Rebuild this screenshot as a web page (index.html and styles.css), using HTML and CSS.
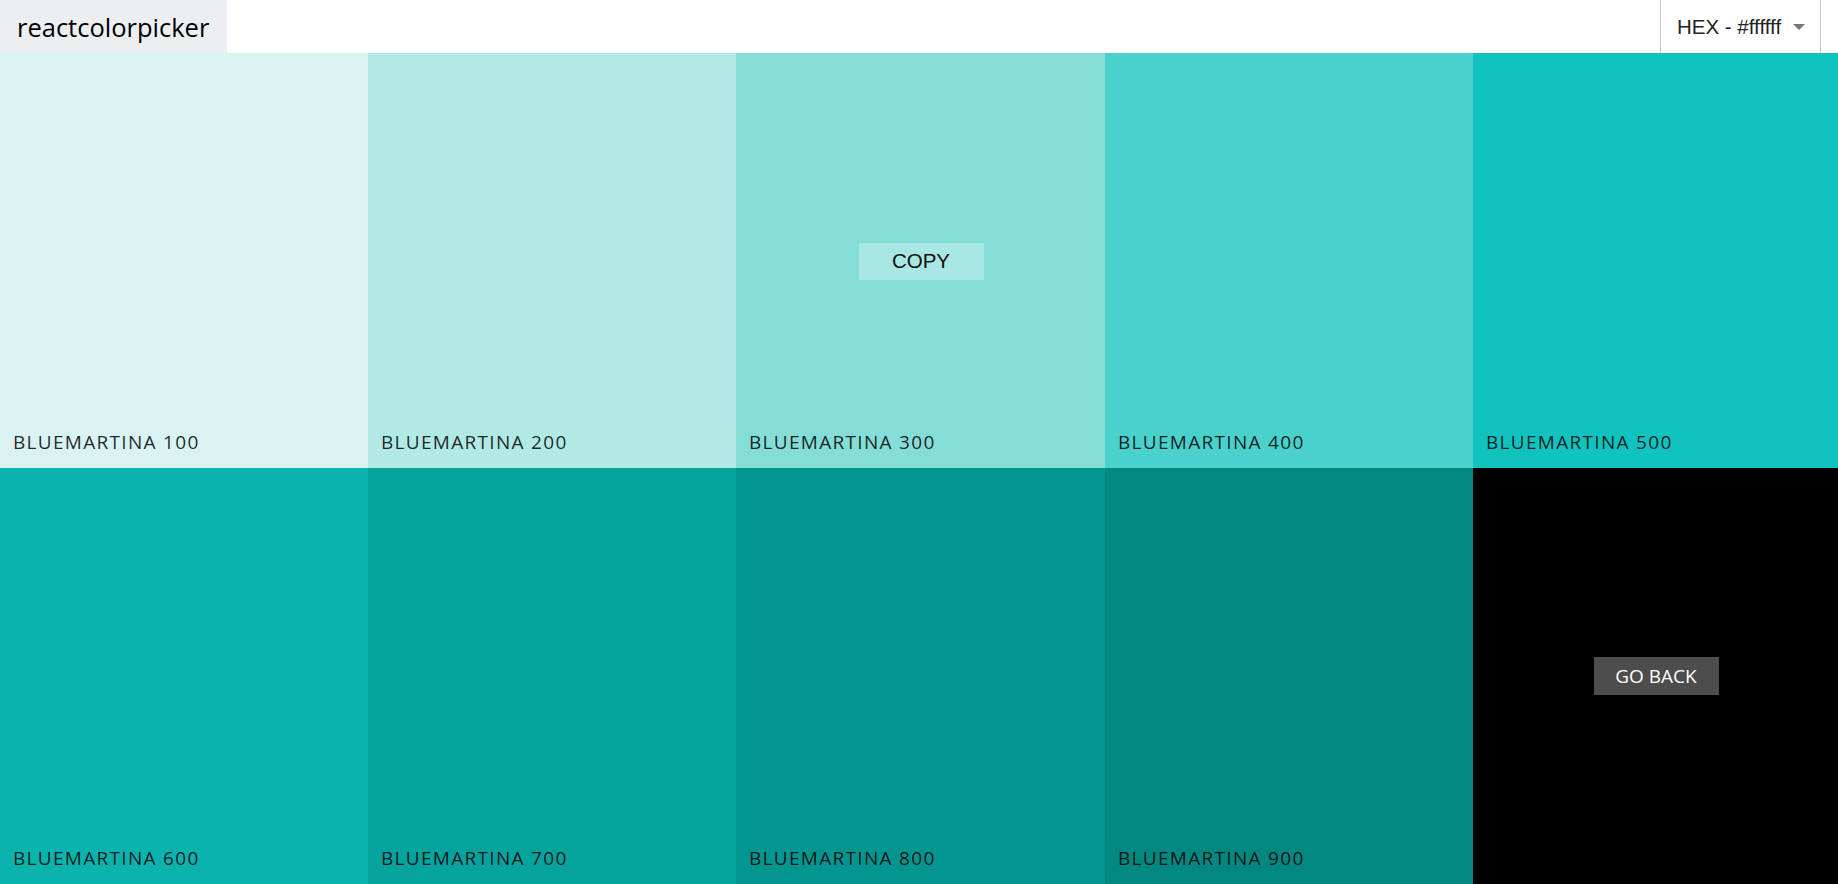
FILE: index.html
```html
<!DOCTYPE html>
<html lang="en">
<head>
<meta charset="utf-8">
<title>reactcolorpicker</title>
<link rel="stylesheet" href="styles.css">
</head>
<body>
<div class="page">
  <nav class="navbar">
    <div class="logo">reactcolorpicker</div>
    <div class="select">
      <span class="select-text">HEX - #ffffff</span>
      <span class="select-arrow"></span>
    </div>
  </nav>
  <main class="palette">
    <div class="box c100"><span class="label">BLUEMARTINA 100</span></div>
    <div class="box c200"><span class="label">BLUEMARTINA 200</span></div>
    <div class="box c300"><button class="copy">COPY</button><span class="label">BLUEMARTINA 300</span></div>
    <div class="box c400"><span class="label">BLUEMARTINA 400</span></div>
    <div class="box c500"><span class="label">BLUEMARTINA 500</span></div>
    <div class="box c600"><span class="label">BLUEMARTINA 600</span></div>
    <div class="box c700"><span class="label">BLUEMARTINA 700</span></div>
    <div class="box c800"><span class="label">BLUEMARTINA 800</span></div>
    <div class="box c900"><span class="label">BLUEMARTINA 900</span></div>
    <div class="box back"><button class="back-button">GO BACK</button></div>
  </main>
</div>
</body>
</html>
```
FILE: styles.css
```css
* { box-sizing: border-box; }
html, body { margin: 0; padding: 0; height: 100%; }
body { background: #fff; overflow: hidden; }
.page { height: 100vh; display: flex; flex-direction: column; }

.navbar {
  height: 53px;
  flex: 0 0 53px;
  display: flex;
  align-items: stretch;
  background: #fff;
}
.logo {
  width: 227px;
  background: #eceff1;
  display: flex;
  align-items: center;
  padding-left: 17px;
  font-family: "Open Sans", sans-serif;
  font-size: 25.5px;
  color: #000;
}
.select {
  margin-left: auto;
  margin-right: 17px;
  width: 161px;
  border-left: 1px solid #c8c8c8;
  border-right: 1px solid #c8c8c8;
  display: flex;
  align-items: center;
  padding-left: 16px;
  font-family: "Liberation Sans", Arial, sans-serif;
  font-size: 20.5px;
  color: #222;
}
.select-arrow {
  margin-left: 12px;
  margin-top: 1px;
  width: 0; height: 0;
  border-left: 6px solid transparent;
  border-right: 6px solid transparent;
  border-top: 6px solid #757575;
}

.palette {
  flex: 1;
  display: grid;
  grid-template-columns: 368px 368px 369px 368px 1fr;
  grid-template-rows: 415px 1fr;
}
.box {
  position: relative;
  display: flex;
  flex-direction: column;
  justify-content: flex-end;
  padding: 0 0 13px 13px;
}
.label {
  font-family: "Open Sans", sans-serif;
  font-size: 19px;
  letter-spacing: 1.3px;
  color: rgba(0,0,0,0.85);
}
.c100 { background: #d9f3f3; }
.c200 { background: #b1eae5; }
.c300 { background: #85ddd8; }
.c400 { background: #4ad1cc; }
.c500 { background: #10c3be; }
.c600 { background: #0ab3ae; }
.c700 { background: #05a39e; }
.c800 { background: #03958f; }
.c900 { background: #028880; }
.back {
  background: #000;
  justify-content: center;
  align-items: center;
  padding: 0;
}

.copy {
  position: absolute;
  left: 50%;
  top: 50%;
  width: 125px;
  height: 37px;
  margin-left: -62px;
  margin-top: -18px;
  border: none;
  background: rgba(255,255,255,0.3);
  font-family: "Liberation Sans", Arial, sans-serif;
  font-size: 20.5px;
  color: #111;
  padding: 0;
}
.back-button {
  width: 125px;
  height: 38px;
  margin-left: 1px;
  border: none;
  background: rgba(255,255,255,0.3);
  font-family: "Open Sans", sans-serif;
  font-size: 19px;
  color: #fff;
  padding: 0;
}
```
